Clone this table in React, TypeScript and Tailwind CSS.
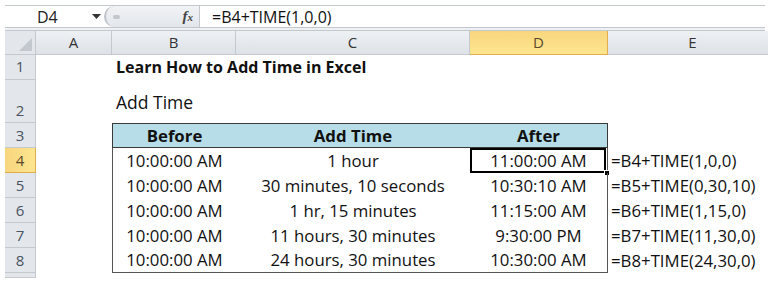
import type React from "react";

const sheetFont = "font-['Open_Sans',sans-serif]";

const rows = [
  { n: 4, before: "10:00:00 AM", add: "1 hour", after: "11:00:00 AM", formula: "=B4+TIME(1,0,0)" },
  { n: 5, before: "10:00:00 AM", add: "30 minutes, 10 seconds", after: "10:30:10 AM", formula: "=B5+TIME(0,30,10)" },
  { n: 6, before: "10:00:00 AM", add: "1 hr, 15 minutes", after: "11:15:00 AM", formula: "=B6+TIME(1,15,0)" },
  { n: 7, before: "10:00:00 AM", add: "11 hours, 30 minutes", after: "9:30:00 PM", formula: "=B7+TIME(11,30,0)" },
  { n: 8, before: "10:00:00 AM", add: "24 hours, 30 minutes", after: "10:30:00 AM", formula: "=B8+TIME(24,30,0)" },
];

const ColHead: React.FC<{ label: string; active?: boolean }> = ({ label, active }) => (
  <div
    className={`flex items-center justify-center border-r border-b text-[15px] ${
      active
        ? "border-[#e2ad4f] bg-gradient-to-b from-[#f8d67e] to-[#fde58f] text-[#5a4a2a]"
        : "border-[#c4c9d0] bg-gradient-to-b from-[#eef1f4] to-[#dde2e8] text-[#333]"
    }`}
  >
    {label}
  </div>
);

const RowHead: React.FC<{ label?: string; active?: boolean; align?: string }> = ({
  label,
  active,
  align = "items-center",
}) => (
  <div
    className={`flex ${align} justify-center border-r border-b text-[15px] ${
      active
        ? "border-[#e2ad4f] bg-gradient-to-r from-[#f8d67e] to-[#fde58f] text-[#5a4a2a]"
        : "border-[#c4c9d0] bg-[#e3e7ec] text-[#4a5361]"
    }`}
  >
    {label}
  </div>
);

export default function App() {
  return (
    <div className={`h-[282px] w-[768px] overflow-hidden bg-white pt-[5px] pl-[5px] ${sheetFont}`}>
      {/* formula bar */}
      <div className="flex h-[23px] w-[760px] border-y border-[#c3c8cf]">
        <div className="flex w-[99px] items-center bg-white">
          <span className="w-[87px] pl-[32px] text-[16px] text-[#222]">D4</span>
          <svg width="9" height="5" viewBox="0 0 9 5">
            <path d="M0 0 L9 0 L4.5 5 Z" fill="#333" />
          </svg>
        </div>
        <div className="flex w-[95px] items-center rounded-l-full border-l-2 border-[#bcc1c8] bg-gradient-to-b from-[#f1f3f6] to-[#e2e6eb]">
          <span className="ml-[7px] h-[4px] w-[7px] rounded-full bg-[#c2c7cd]" />
          <span className="ml-auto mr-[6px] font-['Liberation_Serif',serif] text-[15px] font-bold italic text-[#444]">
            f<span className="text-[11px]">x</span>
          </span>
        </div>
        <div className="flex flex-1 items-center border-l border-[#c3c8cf] bg-white pl-[12px] text-[16px] text-[#111]">
          =B4+TIME(1,0,0)
        </div>
      </div>
      <div className="h-[3px] w-[760px] border-b border-[#c3c8cf] bg-[#eef0f3]" />

      {/* sheet */}
      <div className="grid grid-cols-[31px_76px_124px_234px_138px_170px] grid-rows-[24px_25px_43px_25px_25px_25px_25px_25px_25px_5px] text-[16.8px] text-[#111]">
        {/* column headers */}
        <div className="relative border-r border-b border-[#c4c9d0] bg-[#e3e7ec]">
          <svg className="absolute right-[3px] bottom-[3px]" width="13" height="13" viewBox="0 0 13 13">
            <path d="M13 0 L13 13 L0 13 Z" fill="#c3c8ce" />
          </svg>
        </div>
        <ColHead label="A" />
        <ColHead label="B" />
        <ColHead label="C" />
        <ColHead label="D" active />
        <ColHead label="E" />

        {/* row 1 */}
        <RowHead label="1" align="items-end pb-[2px]" />
        <div />
        <div className="col-span-4 flex items-end pb-[1px] pl-[4px] text-[16px] font-bold whitespace-nowrap">
          Learn How to Add Time in Excel
        </div>

        {/* row 2 */}
        <RowHead label="2" align="items-end pb-[1px]" />
        <div />
        <div className="col-span-4 flex items-center pt-[2px] pl-[4px] text-[17.5px] whitespace-nowrap">
          Add Time
        </div>

        {/* row 3: table header */}
        <RowHead label="3" />
        <div />
        <div className="flex items-center justify-center border-y border-l border-[#3a3a3a] bg-[#b7dee8] font-bold">
          Before
        </div>
        <div className="flex items-center justify-center border-y border-[#3a3a3a] bg-[#b7dee8] font-bold">
          Add Time
        </div>
        <div className="flex items-center justify-center border-y border-r border-[#3a3a3a] bg-[#b7dee8] font-bold">
          After
        </div>
        <div />

        {rows.map((r, i) => {
          const last = i === rows.length - 1;
          const active = r.n === 4;
          return [
            <RowHead key={`h${r.n}`} label={String(r.n)} active={active} />,
            <div key={`a${r.n}`} />,
            <div
              key={`b${r.n}`}
              className={`flex items-center justify-center border-l border-[#555] ${last ? "border-b" : ""}`}
            >
              {r.before}
            </div>,
            <div
              key={`c${r.n}`}
              className={`flex items-center justify-center whitespace-nowrap border-[#555] ${last ? "border-b" : ""}`}
            >
              {r.add}
            </div>,
            <div
              key={`d${r.n}`}
              className={`relative flex items-center justify-center border-r border-[#555] ${last ? "border-b" : ""}`}
            >
              {active && (
                <>
                  <div className="absolute inset-0 right-[1px] border-2 border-black" />
                  <div className="absolute right-[-3px] bottom-[-3px] h-[6px] w-[6px] border border-white bg-black" />
                </>
              )}
              <span className="relative">{r.after}</span>
            </div>,
            <div key={`e${r.n}`} className="flex items-center pl-[3px] whitespace-nowrap">
              {r.formula}
            </div>,
          ];
        })}

        {/* row 9 (cut off) */}
        <RowHead />
      </div>
    </div>
  );
}
